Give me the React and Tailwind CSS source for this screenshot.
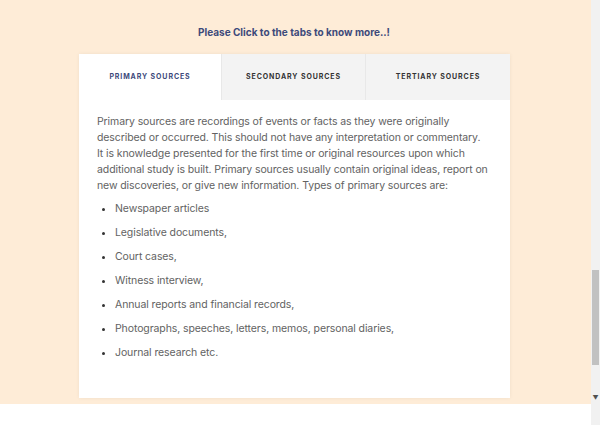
const items = [
  "Newspaper articles",
  "Legislative documents,",
  "Court cases,",
  "Witness interview,",
  "Annual reports and financial records,",
  "Photographs, speeches, letters, memos, personal diaries,",
  "Journal research etc.",
];

const lines = [
  "Primary sources are recordings of events or facts as they were originally",
  "described or occurred. This should not have any interpretation or commentary.",
  "It is knowledge presented for the first time or original resources upon which",
  "additional study is built. Primary sources usually contain original ideas, report on",
  "new discoveries, or give new information. Types of primary sources are:",
];

const tabs = ["Primary Sources", "Secondary Sources", "Tertiary Sources"];

export default function App() {
  return (
    <div className="flex h-[425px] w-[600px] overflow-hidden bg-white font-['Inter',sans-serif]">
      <div className="flex w-[591px] flex-col">
        {/* peach section */}
        <section className="flex h-[404px] flex-col bg-[#feecd7]">
          <h2 className="mt-[25px] ml-[198px] text-[10px] font-bold text-[#3d4a7b]">
            Please Click to the tabs to know more..!
          </h2>

          <div className="mt-[14px] ml-[79px] h-[344px] w-[431px] bg-white shadow-[0_0_4px_rgba(0,0,0,0.06)]">
            <div className="flex h-[46px]">
              {tabs.map((t, i) => (
                <button
                  key={t}
                  className={
                    i === 0
                      ? "w-[142px] bg-white text-[7px] font-bold uppercase tracking-[0.9px] text-[#3d4a7b]"
                      : i === 1
                      ? "w-[144px] border-l border-[#e8e8e8] bg-[#f3f3f3] text-[7px] font-bold uppercase tracking-[0.9px] text-[#333]"
                      : "w-[145px] border-l border-[#e8e8e8] bg-[#f3f3f3] text-[7px] font-bold uppercase tracking-[0.9px] text-[#333]"
                  }
                >
                  {t}
                </button>
              ))}
            </div>

            <div className="pl-[18px] pr-[10px] pt-[14px] text-[10.5px] leading-[16px] tracking-[-0.1px] text-[#626262]">
              <p>
                {lines.map((l) => (
                  <span key={l} className="block whitespace-nowrap">
                    {l}
                  </span>
                ))}
              </p>
              <ul className="mt-[3px] list-disc pl-[18px] marker:text-[#333]">
                {items.map((it) => (
                  <li key={it} className="h-[24px] leading-[24px]">
                    {it}
                  </li>
                ))}
              </ul>
            </div>
          </div>
        </section>
        <div className="flex-1 bg-white" />
      </div>

      {/* scrollbar */}
      <div className="flex w-[9px] flex-col bg-[#f1f1f1]">
        <div className="h-[270px]" />
        <div className="mx-auto h-[95px] w-[7px] bg-[#c1c1c1]" />
        <div className="flex-1" />
        <div className="mb-[24px] text-center text-[6px] leading-none text-[#505050]">▼</div>
      </div>
    </div>
  );
}
